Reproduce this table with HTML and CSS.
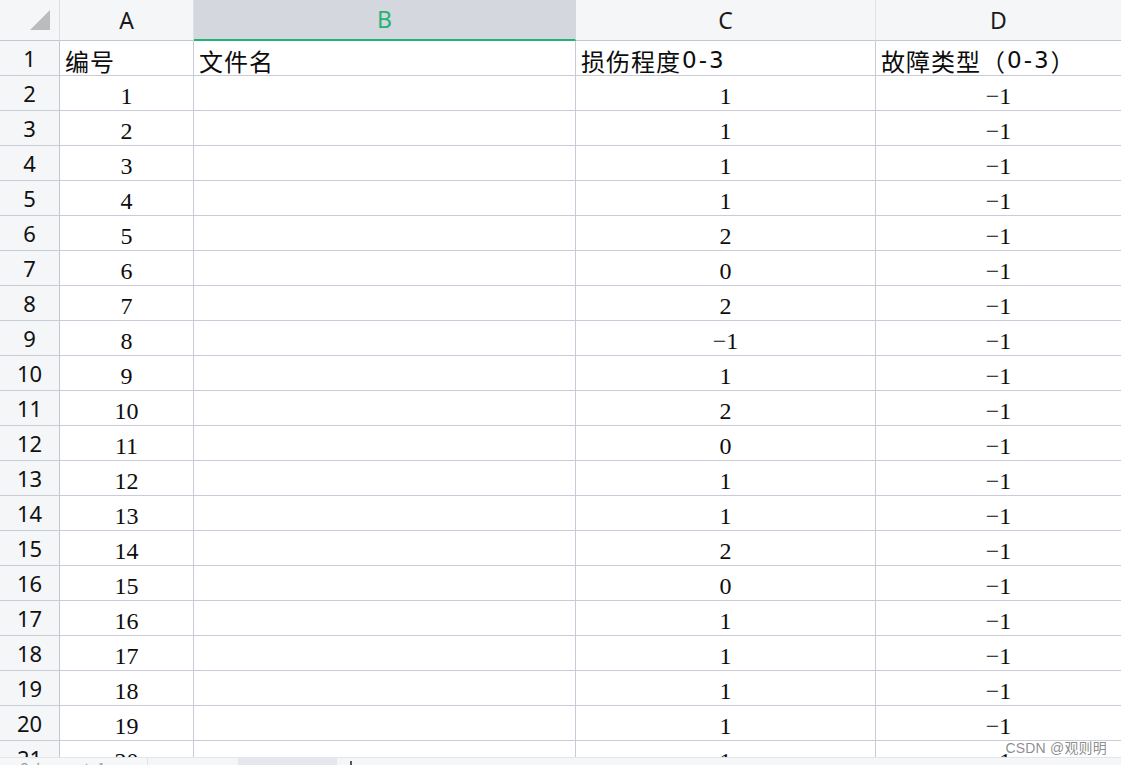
FILE: index.html
```html
<!DOCTYPE html>
<html lang="zh-CN">
<head>
<meta charset="utf-8">
<title>Sheet</title>
<link rel="stylesheet" href="styles.css">
</head>
<body>
<div class="app">
  <div class="sheet">
    <div class="grid">
      <div class="corner"><span class="tri"></span></div>
      <div class="ch">A</div>
      <div class="ch sel">B</div>
      <div class="ch">C</div>
      <div class="ch last">D</div>

      <div class="rh">1</div><div class="c txt">编号</div><div class="c txt">文件名</div><div class="c txt">损伤程度<span class="lat">0-3</span></div><div class="c txt last">故障类型（<span class="lat">0-3</span>）</div>
      <div class="rh">2</div><div class="c num">1</div><div class="c"></div><div class="c num">1</div><div class="c num last">−1</div>
      <div class="rh">3</div><div class="c num">2</div><div class="c"></div><div class="c num">1</div><div class="c num last">−1</div>
      <div class="rh">4</div><div class="c num">3</div><div class="c"></div><div class="c num">1</div><div class="c num last">−1</div>
      <div class="rh">5</div><div class="c num">4</div><div class="c"></div><div class="c num">1</div><div class="c num last">−1</div>
      <div class="rh">6</div><div class="c num">5</div><div class="c"></div><div class="c num">2</div><div class="c num last">−1</div>
      <div class="rh">7</div><div class="c num">6</div><div class="c"></div><div class="c num">0</div><div class="c num last">−1</div>
      <div class="rh">8</div><div class="c num">7</div><div class="c"></div><div class="c num">2</div><div class="c num last">−1</div>
      <div class="rh">9</div><div class="c num">8</div><div class="c"></div><div class="c num">−1</div><div class="c num last">−1</div>
      <div class="rh">10</div><div class="c num">9</div><div class="c"></div><div class="c num">1</div><div class="c num last">−1</div>
      <div class="rh">11</div><div class="c num">10</div><div class="c"></div><div class="c num">2</div><div class="c num last">−1</div>
      <div class="rh">12</div><div class="c num">11</div><div class="c"></div><div class="c num">0</div><div class="c num last">−1</div>
      <div class="rh">13</div><div class="c num">12</div><div class="c"></div><div class="c num">1</div><div class="c num last">−1</div>
      <div class="rh">14</div><div class="c num">13</div><div class="c"></div><div class="c num">1</div><div class="c num last">−1</div>
      <div class="rh">15</div><div class="c num">14</div><div class="c"></div><div class="c num">2</div><div class="c num last">−1</div>
      <div class="rh">16</div><div class="c num">15</div><div class="c"></div><div class="c num">0</div><div class="c num last">−1</div>
      <div class="rh">17</div><div class="c num">16</div><div class="c"></div><div class="c num">1</div><div class="c num last">−1</div>
      <div class="rh">18</div><div class="c num">17</div><div class="c"></div><div class="c num">1</div><div class="c num last">−1</div>
      <div class="rh">19</div><div class="c num">18</div><div class="c"></div><div class="c num">1</div><div class="c num last">−1</div>
      <div class="rh">20</div><div class="c num">19</div><div class="c"></div><div class="c num">1</div><div class="c num last">−1</div>
      <div class="rh">21</div><div class="c num">20</div><div class="c"></div><div class="c num">1</div><div class="c num last">−1</div>
    </div>
  </div>
  <div class="tabs">
    <div class="tab first">Sheet1 Sheet2 Sheet3</div>
    <div class="tab gap"></div>
    <div class="tab active"></div>
    <div class="tab rest"><span class="mark"></span></div>
  </div>
  <div class="watermark">CSDN @观则明</div>
</div>
</body>
</html>
```

FILE: styles.css
```css
html, body {
  margin: 0;
  padding: 0;
  background: #ffffff;
}

.app {
  position: relative;
  width: 1121px;
  height: 765px;
  overflow: hidden;
  display: flex;
  flex-direction: column;
}

.sheet {
  height: 757px;
  overflow: hidden;
  flex: none;
}

.grid {
  display: grid;
  grid-template-columns: 60px 134px 382px 300px 1fr;
  grid-template-rows: 41px;
  grid-auto-rows: 35px;
}

.corner {
  background: #f5f6f8;
  border-right: 1px solid #dcdfe5;
  border-bottom: 1px solid #c3c7d1;
  position: relative;
}

.tri {
  position: absolute;
  left: 30px;
  top: 10px;
  width: 0;
  height: 0;
  border-left: 20px solid transparent;
  border-bottom: 20px solid #bcbcbc;
}

.ch {
  background: #f5f6f8;
  border-right: 1px solid #dfe1e6;
  border-bottom: 1px solid #c3c7d1;
  display: flex;
  align-items: center;
  justify-content: center;
  font-family: "Noto Sans", "Liberation Sans", sans-serif;
  font-size: 23px;
  color: #1a1a1a;
  padding-bottom: 1px;
}

.ch.sel {
  background: #d4d7de;
  color: #22b474;
  border-bottom: 2px solid #22b474;
  border-right-color: #d4d7de;
}

.ch.last,
.c.last {
  border-right: none;
}

.rh {
  background: #f5f6f8;
  border-right: 1px solid #c3c7d1;
  border-bottom: 1px solid #c8ccd7;
  display: flex;
  align-items: center;
  justify-content: center;
  font-family: "Noto Sans", "Liberation Sans", sans-serif;
  font-size: 22px;
  color: #111111;
}

.c {
  border-right: 1px solid #c9ccd8;
  border-bottom: 1px solid #c9ccd8;
  display: flex;
  align-items: center;
  color: #0d0d0d;
  overflow: hidden;
  white-space: nowrap;
}

.c.txt {
  justify-content: flex-start;
  padding-left: 5px;
  padding-top: 4px;
  font-family: "Noto Sans CJK SC", "Noto Sans", sans-serif;
  font-size: 24px;
  letter-spacing: 1px;
}

.c.txt .lat {
  font-family: "DejaVu Sans", "Noto Sans", sans-serif;
  font-size: 23px;
  letter-spacing: 2px;
  margin-left: 1px;
}

.c.num {
  justify-content: center;
  padding-top: 6px;
  font-family: "Liberation Serif", "Times New Roman", serif;
  font-size: 24px;
}

.tabs {
  flex: none;
  height: 8px;
  display: flex;
  background: #f3f4f7;
  border-top: 1px solid #e3e5ea;
  box-sizing: border-box;
}

.tab {
  height: 100%;
  overflow: hidden;
}

.tab.first {
  width: 148px;
  background: #f6f7f9;
  border-right: 1px solid #e1e3e8;
  font-family: "Noto Sans CJK SC", sans-serif;
  font-size: 14px;
  color: #9a9ca3;
  line-height: 20px;
  padding-left: 20px;
  box-sizing: border-box;
  letter-spacing: 8px;
}

.tab.gap {
  width: 90px;
  background: #f5f6f8;
}

.tab.active {
  width: 99px;
  background: #e6e7ec;
}

.tab.rest {
  flex: 1;
  background: #f5f6f8;
  position: relative;
}

.mark {
  position: absolute;
  left: 13px;
  top: 3px;
  width: 2px;
  height: 5px;
  background: #555;
}

.watermark {
  position: absolute;
  right: 14px;
  bottom: 8px;
  font-family: "Liberation Sans", "Noto Sans CJK SC", sans-serif;
  font-size: 14px;
  color: rgba(120, 120, 120, 0.85);
  text-shadow: 0 0 2px #ffffff;
  letter-spacing: 0.2px;
}
```
